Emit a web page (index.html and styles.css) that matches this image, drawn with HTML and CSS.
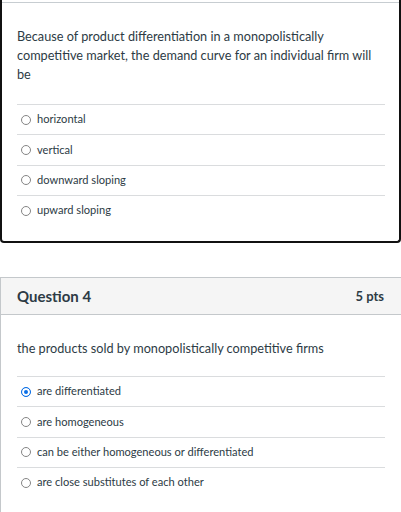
FILE: index.html
```html
<!DOCTYPE html>
<html>
<head>
<meta charset="utf-8">
<link rel="stylesheet" href="styles.css">
</head>
<body>
<div class="card card-focus">
  <div class="prev-edge"></div>
  <div class="card-body">
    <p class="question-text">Because of product differentiation in a monopolistically competitive market, the demand curve for an individual firm will be</p>
    <div class="answers">
      <div class="answer"><span class="radio"></span><span class="label">horizontal</span></div>
      <div class="answer"><span class="radio"></span><span class="label">vertical</span></div>
      <div class="answer"><span class="radio"></span><span class="label">downward sloping</span></div>
      <div class="answer"><span class="radio"></span><span class="label">upward sloping</span></div>
    </div>
  </div>
</div>
<div class="card card-plain">
  <div class="card-header">
    <span class="q-title">Question 4</span>
    <span class="q-pts">5 pts</span>
  </div>
  <div class="card-body body-2">
    <p class="question-text">the products sold by monopolistically competitive firms</p>
    <div class="answers">
      <div class="answer"><span class="radio checked"></span><span class="label">are differentiated</span></div>
      <div class="answer"><span class="radio"></span><span class="label">are homogeneous</span></div>
      <div class="answer"><span class="radio"></span><span class="label">can be either homogeneous or differentiated</span></div>
      <div class="answer"><span class="radio"></span><span class="label">are close substitutes of each other</span></div>
    </div>
  </div>
</div>
</body>
</html>
```

FILE: styles.css
```css
html, body {
  margin: 0;
  padding: 0;
  background: #fff;
  overflow: hidden;
}
body {
  width: 401px;
  font-family: Lato, "Open Sans", sans-serif;
  color: #2d3b45;
}
.card {
  box-sizing: border-box;
}
.card-focus {
  width: 401px;
  border: 2px solid #111;
  border-top: none;
  border-radius: 0 0 4px 4px;
  height: 243px;
}
.prev-edge {
  height: 2px;
  border-bottom: 1px solid #c7cdd1;
}
.card-body {
  padding: 24px 14px 0 15px;
}
.question-text {
  margin: 0;
  font-size: 12.7px;
  line-height: 19px;
}
.answers {
  margin-top: 20px;
}
.answer {
  box-sizing: border-box;
  height: 30.4px;
  border-top: 1px solid #dadcde;
  display: flex;
  align-items: center;
  padding-left: 4px;
  padding-bottom: 1px;
}
.radio {
  box-sizing: border-box;
  width: 10px;
  height: 10px;
  border: 1px solid #858585;
  border-radius: 50%;
  margin-right: 6px;
  margin-top: 1px;
  flex: none;
}
.radio.checked {
  border: 1px solid #0b6fe6;
  background: #0b6fe6;
  box-shadow: inset 0 0 0 2px #fff;
}
.label {
  font-size: 11.1px;
  line-height: 14px;
}
.card-plain {
  margin-top: 34px;
  width: 404px;
  border: 1px solid #c4c8cb;
  height: 300px;
}
.card-header {
  height: 36px;
  background: #f5f5f5;
  border-bottom: 1px solid #c4c8cb;
  display: flex;
  align-items: center;
  justify-content: space-between;
  padding: 0 19px 0 16px;
}
.q-title {
  font-size: 15px;
  font-weight: 700;
}
.q-pts {
  font-size: 13px;
  font-weight: 700;
}
.body-2 {
  padding: 24px 18px 0 16px;
}
.body-2 .answers {
  margin-top: 18px;
}
```
